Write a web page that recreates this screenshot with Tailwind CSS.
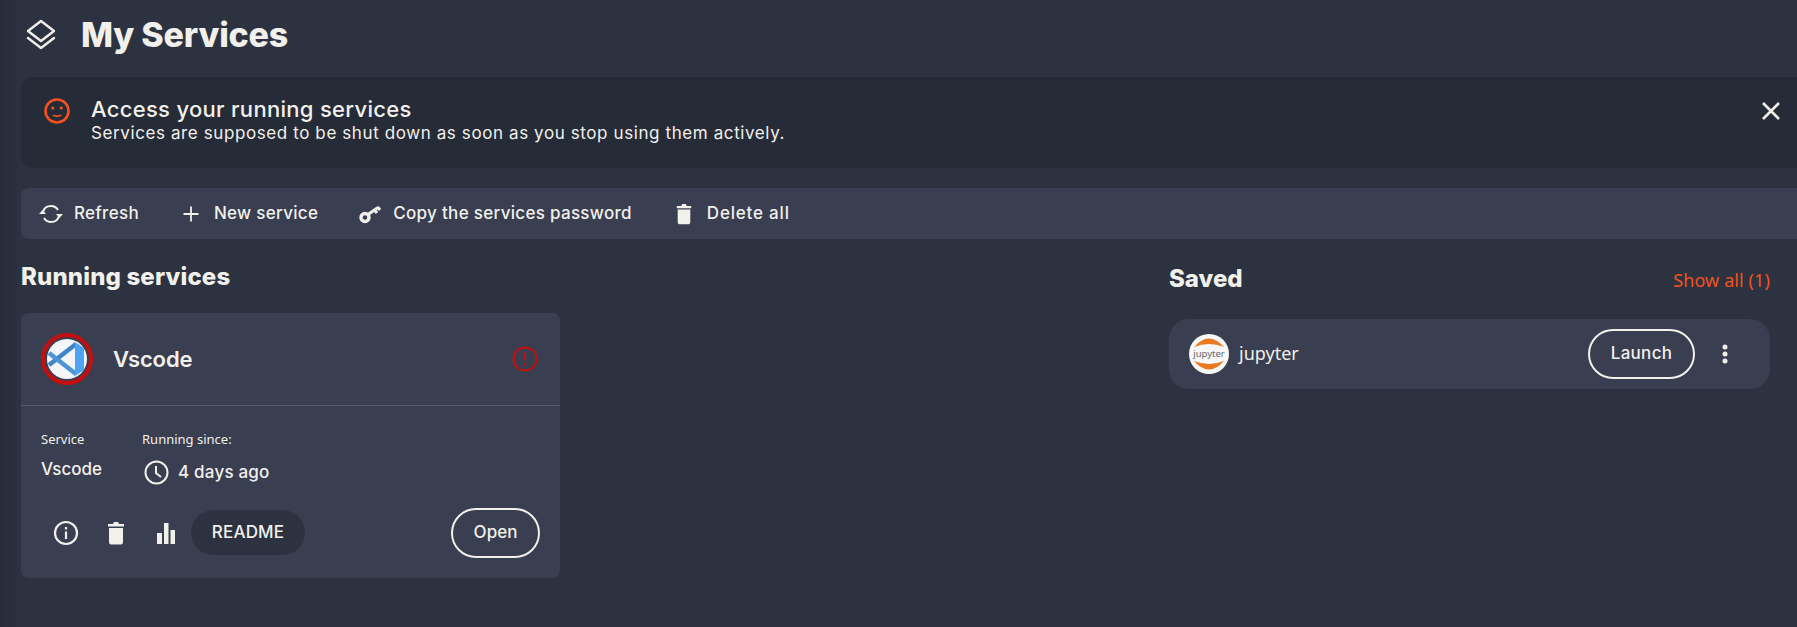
<!DOCTYPE html>
<html lang="en">
<head>
    <meta charset="UTF-8">
    <title>My Services</title>
    <script src="https://cdn.jsdelivr.net/npm/@tailwindcss/browser@4"></script>
</head>
<body class="bg-[#2c3240] font-['Inter',sans-serif] text-[#f2f0eb] w-[1797px] h-[627px] overflow-hidden">
<div class="relative h-full pl-[21px]">
    <div class="absolute left-0 top-0 h-full w-[20px] bg-gradient-to-r from-[#272c39] to-[#2c3240]"></div>

    <div class="relative">
        <!-- title -->
        <div class="flex items-center h-[77px] pb-[7px]">
            <svg class="w-[32px] h-[32px] ml-[4px]" viewBox="0 0 32 32" fill="none" stroke="#f2f0eb" stroke-width="2.4" stroke-linejoin="round" stroke-linecap="round">
                <path d="M16 2 L29 12 L16 22 L3 12 Z"/>
                <path d="M3 19 L16 29 L29 19"/>
            </svg>
            <h1 class="ml-[24px] text-[34px] font-extrabold tracking-[-0.2px] leading-none">My Services</h1>
        </div>

        <!-- alert -->
        <div class="flex h-[91px] rounded-l-xl bg-[#262b38] relative">
            <svg class="w-[28px] h-[28px] ml-[22px] mt-[20px] shrink-0" viewBox="0 0 28 28" fill="none" stroke="#f4511e" stroke-width="2.6">
                <circle cx="14" cy="14" r="11.5"/>
                <circle cx="9.8" cy="11" r="1.6" fill="#f4511e" stroke="none"/>
                <circle cx="18.2" cy="11" r="1.6" fill="#f4511e" stroke="none"/>
                <path d="M10.5 18.5 Q14 20 17.5 18.5" stroke-width="1.8" stroke-linecap="round"/>
            </svg>
            <div class="ml-[20px] mt-[19px]">
                <div class="text-[22px] leading-[26px] font-medium tracking-[0.3px]">Access your running services</div>
                <div class="text-[17px] leading-[23px] tracking-[0.6px]">Services are supposed to be shut down as soon as you stop using them actively.</div>
            </div>
            <svg class="absolute right-[16px] top-[24px] w-[20px] h-[20px]" viewBox="0 0 20 20" stroke="#f2f0eb" stroke-width="2.6">
                <path d="M2 2 L18 18 M18 2 L2 18"/>
            </svg>
        </div>

        <!-- toolbar -->
        <div class="flex items-center h-[51px] mt-[20px] rounded-l-lg bg-[#393e50] text-[17px] font-medium tracking-[0.3px]">
            <svg class="w-[24px] h-[24px] ml-[18px]" viewBox="0 0 24 24" fill="none" stroke="#f2f0eb" stroke-width="2">
                <path d="M4 10 C5 6 8 4 12 4 C15 4 17.500 5.500 19 8"/>
                <path d="M20 14 C19 18 16 20 12 20 C9 20 6.500 18.500 5 16"/>
                <path d="M0 12 L7 12 L3.500 8 Z M24 12 L17 12 L20.500 16 Z" fill="#f2f0eb" stroke="none"/>
            </svg>
            <span class="ml-[11px]">Refresh</span>
            <svg class="w-[16px] h-[16px] ml-[44px]" viewBox="0 0 16 16" stroke="#f2f0eb" stroke-width="1.8">
                <path d="M8 0.500 V15.500 M0.500 8 H15.500"/>
            </svg>
            <span class="ml-[15px]">New service</span>
            <svg class="w-[22px] h-[20px] ml-[41px]" viewBox="0 0 22 20" fill="none" stroke="#f2f0eb">
                <circle cx="6" cy="13.500" r="4" stroke-width="3.400"/>
                <path d="M9 10.500 L19 3.500 M15.500 6 L18 9 M18.500 3 L21 6" stroke-width="3"/>
            </svg>
            <span class="ml-[12px]">Copy the services password</span>
            <svg class="w-[18px] h-[22px] ml-[43px]" viewBox="0 0 20 24" fill="#f2f0eb">
                <path d="M2 3 H7 L8 1 H12 L13 3 H18 V5.500 H2 Z"/>
                <path d="M3 7 H17 V21 Q17 23.500 15 23.500 H5 Q3 23.500 3 21 Z"/>
            </svg>
            <span class="ml-[14px] tracking-[0.8px]">Delete all</span>
        </div>

        <!-- main columns -->
        <div class="flex mt-[22px]">
            <div class="w-[1148px] shrink-0">
                <h2 class="text-[24px] font-extrabold leading-[32px] tracking-[0.15px]">Running services</h2>
                <div class="w-[539px] h-[265px] mt-[20px] rounded-lg bg-[#393e50]">
                    <div class="flex items-center h-[93px] border-b border-[#565a6b] pl-[20px] pr-[22px]">
                        <div class="w-[52px] h-[52px] rounded-full border-[4px] border-[#c40f0f] p-[2px]">
                            <svg class="w-full h-full" viewBox="0 0 40 40">
                                <defs><clipPath id="vs-clip"><circle cx="20" cy="20" r="20"/></clipPath></defs>
                                <circle cx="20" cy="20" r="20" fill="#f5f6f8"/>
                                <g clip-path="url(#vs-clip)">
                                    <path d="M29 5 L2 26" stroke="#3f85c9" stroke-width="4.500" fill="none"/>
                                    <path d="M2 14 L29 35" stroke="#4a94d8" stroke-width="4.500" fill="none"/>
                                    <path d="M28 3 L37 9 V31 L28 37 Z" fill="#4ea3f2"/>
                                </g>
                            </svg>
                        </div>
                        <span class="ml-[20px] text-[22px] font-semibold -tracking-[0.1px]">Vscode</span>
                        <svg class="ml-auto w-[26px] h-[26px]" viewBox="0 0 26 26" fill="none" stroke="#c40f0f" stroke-width="2">
                            <circle cx="13" cy="13" r="11.500"/>
                            <path d="M13 6.500 V14.500 M13 17 V19.500"/>
                        </svg>
                    </div>
                    <div class="flex pl-[20px] pt-[25px]">
                        <div>
                            <div class="text-[13px] leading-[16px] font-['Noto_Sans',sans-serif]">Service</div>
                            <div class="mt-[10px] text-[17px] leading-[24px] font-medium">Vscode</div>
                        </div>
                        <div class="ml-[40px]">
                            <div class="text-[13px] leading-[16px] font-['Noto_Sans',sans-serif]">Running since:</div>
                            <div class="flex items-center mt-[13px] text-[17px] font-medium tracking-[0.2px]">
                                <svg class="w-[25px] h-[25px] ml-[2px]" viewBox="0 0 25 25" fill="none" stroke="#f2f0eb" stroke-width="2">
                                    <circle cx="12.500" cy="12.500" r="11"/>
                                    <path d="M12 6 V13 L17 17"/>
                                </svg>
                                <span class="ml-[9px]">4 days ago</span>
                            </div>
                        </div>
                    </div>
                    <div class="flex items-center mt-[22px] pl-[32px] pr-[20px]">
                        <svg class="w-[26px] h-[26px]" viewBox="0 0 26 26" fill="none" stroke="#f2f0eb" stroke-width="2.200">
                            <circle cx="13" cy="13" r="11"/>
                            <path d="M13 11.500 V19 M13 7 V9.500"/>
                        </svg>
                        <svg class="w-[20px] h-[24px] ml-[27px]" viewBox="0 0 20 24" fill="#f2f0eb">
                            <path d="M2 3 H7 L8 1 H12 L13 3 H18 V5.500 H2 Z"/>
                            <path d="M3 7 H17 V21 Q17 23.500 15 23.500 H5 Q3 23.500 3 21 Z"/>
                        </svg>
                        <svg class="w-[20px] h-[22px] ml-[30px]" viewBox="0 0 20 22" fill="#f2f0eb">
                            <path d="M1 11 H6 V22 H1 Z M8 1 H12.500 V22 H8 Z M14.500 8 H19 V22 H14.500 Z"/>
                        </svg>
                        <button class="ml-[15px] w-[114px] h-[45px] rounded-full bg-[#2c3240] text-[17px] font-medium tracking-[0.2px]">README</button>
                        <button class="ml-auto w-[89px] h-[50px] rounded-full border-2 border-[#f2f0eb] text-[17px] font-medium">Open</button>
                    </div>
                </div>
            </div>

            <div class="w-[601px] shrink-0">
                <div class="flex items-center justify-between h-[34px] mt-[1px]">
                    <h2 class="text-[24px] font-extrabold">Saved</h2>
                    <a href="#" class="mt-[2px] text-[18px] text-[#f4511e] font-['Noto_Sans',sans-serif] tracking-[0.1px]">Show all (1)</a>
                </div>
                <div class="flex items-center h-[70px] mt-[23px] rounded-[20px] bg-[#393e50] pl-[20px] pr-[42px]">
                    <svg class="w-[40px] h-[40px]" viewBox="0 0 40 40">
                        <circle cx="20" cy="20" r="20" fill="#f7f7f7"/>
                        <path d="M5 13 Q20 -4 35 13 Q20 7 5 13 Z" fill="#e8791f"/>
                        <path d="M5 27 Q20 44 35 27 Q20 33 5 27 Z" fill="#e8791f"/>
                        <text x="20" y="23" text-anchor="middle" font-size="9.500" fill="#666" font-family="Noto Sans">jupyter</text>
                    </svg>
                    <span class="ml-[10px] mb-[2px] text-[18px] font-['Noto_Sans',sans-serif]">jupyter</span>
                    <button class="ml-auto w-[107px] h-[50px] rounded-full border-2 border-[#f2f0eb] text-[17px] font-medium tracking-[0.3px]">Launch</button>
                    <svg class="w-[6px] h-[20px] ml-[27px]" viewBox="0 0 6 20" fill="#f2f0eb">
                        <circle cx="3" cy="3" r="2.500"/>
                        <circle cx="3" cy="10" r="2.500"/>
                        <circle cx="3" cy="17" r="2.500"/>
                    </svg>
                </div>
            </div>
        </div>
    </div>
</div>
</body>
</html>
